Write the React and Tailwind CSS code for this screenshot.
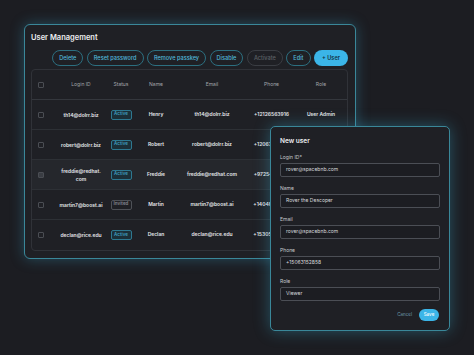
import React from 'react';

const users = [
  { login: 'th14@dolrr.biz', status: 'Active', name: 'Henry', email: 'th14@dolrr.biz', phone: '+12126563916', role: 'User Admin' },
  { login: 'robert@dolrr.biz', status: 'Active', name: 'Robert', email: 'robert@dolrr.biz', phone: '+12063187745', role: 'Viewer' },
  { login: 'freddie@redhat.com', status: 'Active', name: 'Freddie', email: 'freddie@redhat.com', phone: '+97254118832', role: 'Viewer', selected: true },
  { login: 'martin7@boost.ai', status: 'Invited', name: 'Martin', email: 'martin7@boost.ai', phone: '+14048823317', role: 'Viewer' },
  { login: 'declan@rice.edu', status: 'Active', name: 'Declan', email: 'declan@rice.edu', phone: '+15305529061', role: 'Viewer' },
];

const cols = 'grid grid-cols-[24px_50px_30px_40px_72px_47px_1fr] items-center text-center';

function Pill({ children, dim }) {
  return (
    <div
      className={`h-[16px] px-[6px] rounded-full border flex items-center text-[5.6px] font-medium ${
        dim ? 'border-[#3a3d43] text-[#5d6066]' : 'border-[#2c6f80] text-[#52b8da]'
      }`}
    >
      {children}
    </div>
  );
}

function Badge({ status }) {
  const active = status === 'Active';
  return (
    <div className="flex justify-center">
      <div
        className={`h-[10px] w-[21px] rounded-[2px] border flex items-center justify-center text-[4.5px] ${
          active ? 'border-[#2e7890] bg-[#1b3039] text-[#3f9fbf]' : 'border-[#4e5157] text-[#858890]'
        }`}
      >
        {status}
      </div>
    </div>
  );
}

function Field({ label, value }) {
  return (
    <div className="mb-[7px]">
      <div className="h-[8px] leading-[8px] text-[5px] text-[#c9cbcf] mb-[2px]">{label}</div>
      <div className="h-[14px] rounded-[2px] border border-[#4b4e55] bg-[#1c1d22] flex items-center px-[5px] text-[5px] text-[#d8dadd]">
        {value}
      </div>
    </div>
  );
}

export default function App() {
  return (
    <div className="relative w-[474px] h-[355px] overflow-hidden bg-[#1c1d22]" style={{ fontFamily: 'Inter, "Noto Sans", sans-serif' }}>
      {/* User management panel */}
      <div className="ml-[24px] mt-[24px] w-[332px] h-[235px] rounded-[6px] border border-[#3a8799] bg-[#1f2025] shadow-[0_0_14px_rgba(56,170,205,0.35)] px-[6px] pt-[8px]">
        <div className="h-[10px] leading-[10px] text-[7.5px] font-semibold text-[#eceef0]">User Management</div>

        <div className="mt-[7px] flex justify-end gap-[3.5px] pr-[1px]">
          <Pill>Delete</Pill>
          <Pill>Reset password</Pill>
          <Pill>Remove passkey</Pill>
          <Pill>Disable</Pill>
          <Pill dim>Activate</Pill>
          <Pill>Edit</Pill>
          <div className="h-[16px] w-[34px] rounded-full bg-[#3bb5e8] flex items-center justify-center text-[5.6px] font-semibold text-[#123040]">
            + User
          </div>
        </div>

        <div className="mt-[3px] mr-[1px] rounded-[4px] border border-[#303238] overflow-hidden">
          <div className={`${cols} h-[30px] border-b border-[#34373d] text-[5px] text-[#a3a6ab]`}>
            <div className="flex justify-start pl-[6px]">
              <div className="w-[6px] h-[6px] rounded-[1px] border border-[#4a4d53]" />
            </div>
            <div>Login ID</div>
            <div>Status</div>
            <div>Name</div>
            <div>Email</div>
            <div>Phone</div>
            <div>Role</div>
          </div>
          {users.map((u, i) => (
            <div
              key={u.login}
              className={`${cols} h-[30px] text-[5px] font-semibold text-[#e4e6e9] ${i < users.length - 1 ? 'border-b border-[#2d3035]' : ''} ${
                u.selected ? 'bg-[#25272c]' : ''
              }`}
            >
              <div className="flex justify-start pl-[6px]">
                <div className={`w-[6px] h-[6px] rounded-[1px] border border-[#4a4d53] ${u.selected ? 'bg-[#3a3d43]' : ''}`} />
              </div>
              <div className="px-[2px] leading-[8px] break-words">
                {u.login === 'freddie@redhat.com' ? (
                  <>
                    freddie@redhat.
                    <br />
                    com
                  </>
                ) : (
                  u.login
                )}
              </div>
              <Badge status={u.status} />
              <div>{u.name}</div>
              <div className="whitespace-nowrap">{u.email}</div>
              <div className="whitespace-nowrap">{u.phone}</div>
              <div className="whitespace-nowrap">{u.role}</div>
            </div>
          ))}
        </div>
      </div>

      {/* New user modal */}
      <div className="absolute left-[270px] top-[126px] w-[180px] h-[205px] rounded-[5px] border border-[#3a8799] bg-[#1f2025] shadow-[0_0_16px_rgba(56,170,205,0.4)] px-[9px] pt-[10px]">
        <div className="h-[8px] leading-[8px] text-[6.5px] font-semibold text-[#eceef0] mb-[8px]">New user</div>
        <Field label="Login ID*" value="rover@spacebnb.com" />
        <Field label="Name" value="Rover the Descoper" />
        <Field label="Email" value="rover@spacebnb.com" />
        <Field label="Phone" value="+15063152858" />
        <Field label="Role" value="Viewer" />
        <div className="mt-[8px] flex justify-end items-center gap-[7px] pr-[1px]">
          <div className="text-[4.5px] text-[#6f9fb0]">Cancel</div>
          <div className="h-[12px] w-[20px] rounded-full bg-[#3bb5e8] flex items-center justify-center text-[4.5px] font-semibold text-[#eaf7fd]">
            Save
          </div>
        </div>
      </div>
    </div>
  );
}
